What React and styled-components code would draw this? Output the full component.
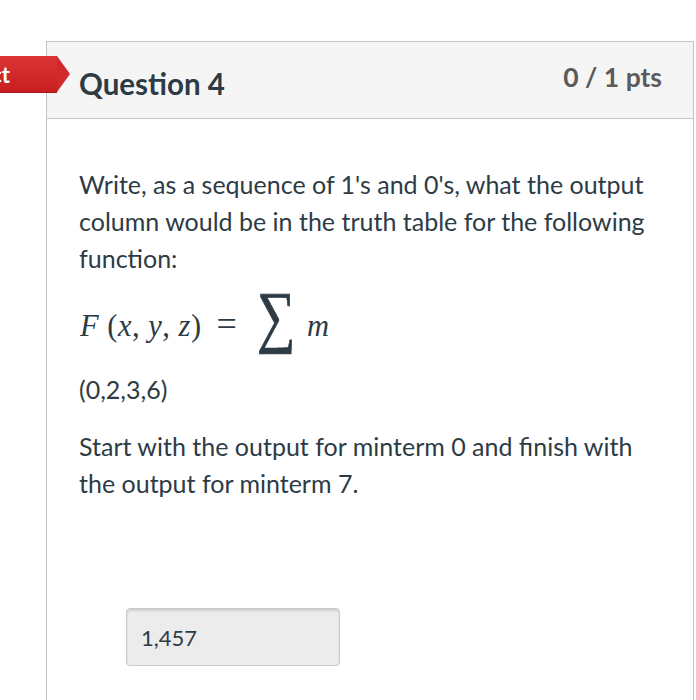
import React from "react";
import styled, { createGlobalStyle } from "styled-components";

const GlobalStyle = createGlobalStyle`
  html, body {
    margin: 0;
    padding: 0;
    background: #ffffff;
  }
  body {
    font-family: Lato, "Open Sans", sans-serif;
    color: #2d3b45;
  }
`;

const Page = styled.div`
  position: relative;
  width: 696px;
  height: 700px;
  overflow: hidden;
  padding-top: 41px;
  box-sizing: border-box;
`;

const Card = styled.div`
  margin-left: 46px;
  width: 648px;
  height: 700px;
  border: 1px solid #c4c4c4;
  box-sizing: border-box;
`;

const Header = styled.div`
  display: flex;
  align-items: center;
  justify-content: space-between;
  height: 77px;
  padding: 0 31px 6px 32px;
  box-sizing: border-box;
  background: #f5f5f5;
  border-bottom: 1px solid #c4c4c4;
`;

const Title = styled.h2`
  margin: 0;
  font-size: 29.5px;
  font-weight: 700;
  color: #2d3b45;
  padding-top: 13px;
`;

const Points = styled.div`
  font-size: 26.5px;
  font-weight: 700;
  color: #5b5b5b;
`;

const Body = styled.div`
  padding: 47px 20px 0 32px;
  font-size: 25px;
  line-height: 37px;
  color: #2d3b45;
`;

const Para = styled.p`
  margin: 0 0 ${(p) => p.gap || 0}px;
`;

const MathLine = styled.div`
  display: flex;
  align-items: baseline;
  font-family: "Liberation Serif", "DejaVu Serif", serif;
  font-size: 30.5px;
  letter-spacing: 0.5px;
  color: #2d3b45;
  margin: 19px 0 0 1px;
  height: 75px;
`;

const Ital = styled.span`
  font-style: italic;
`;

const Op = styled.span`
  font-size: 36px;
  margin: 0 20px 0 15px;
`;

const Sigma = styled.span`
  display: inline-block;
  font-size: 48px;
  line-height: 1;
  transform: scale(1.12, 1.42);
  transform-origin: 50% 70%;
  margin: 0 13px 0 2px;
  -webkit-text-stroke: 0.6px #2d3b45;
`;

const AnswerBox = styled.div`
  margin: 106px 0 0 47px;
  width: 214px;
  height: 58px;
  box-sizing: border-box;
  background: #ececec;
  border: 1px solid #c9c9c9;
  border-radius: 4px;
  box-shadow: inset 0 2px 2px rgba(0, 0, 0, 0.12);
  padding: 0 14px;
  display: flex;
  align-items: center;
  font-size: 22px;
  color: #2d3b45;
`;

const Tab = styled.div`
  position: absolute;
  left: 0;
  top: 56px;
  height: 37px;
  width: 57px;
  background: linear-gradient(#dc3436, #c81e20);
  border-bottom: 1px solid #a8191b;
  box-sizing: border-box;
`;

const TabClip = styled.div`
  position: absolute;
  inset: 0;
  overflow: hidden;
  display: flex;
  align-items: center;
  justify-content: flex-end;
  padding-right: 47px;
  box-sizing: border-box;
  color: #fff;
  font-size: 22px;
  font-weight: 700;
  white-space: nowrap;
`;

const TabArrow = styled.div`
  position: absolute;
  left: 57px;
  top: 0;
  width: 0;
  height: 0;
  border-top: 18px solid transparent;
  border-bottom: 18px solid transparent;
  border-left: 13px solid #d22a2c;
`;

export default function App() {
  return (
    <Page>
      <GlobalStyle />
      <Card>
        <Header>
          <Title>Question 4</Title>
          <Points>0 / 1 pts</Points>
        </Header>
        <Body>
          <Para>
            Write, as a sequence of 1's and 0's, what the output column would be
            in the truth table for the following function:
          </Para>
          <MathLine>
            <Ital>F</Ital>
            <span>&nbsp;(</span>
            <Ital>x</Ital>
            <span>,&nbsp;</span>
            <Ital>y</Ital>
            <span>,&nbsp;</span>
            <Ital>z</Ital>
            <span>)</span>
            <Op>=</Op>
            <Sigma>∑</Sigma>
            <Ital>m</Ital>
          </MathLine>
          <Para gap={20}>(0,2,3,6)</Para>
          <Para>
            Start with the output for minterm 0 and finish with the output for
            minterm 7.
          </Para>
          <AnswerBox>1,457</AnswerBox>
        </Body>
      </Card>
      <Tab>
        <TabClip>Incorrect</TabClip>
        <TabArrow />
      </Tab>
    </Page>
  );
}
